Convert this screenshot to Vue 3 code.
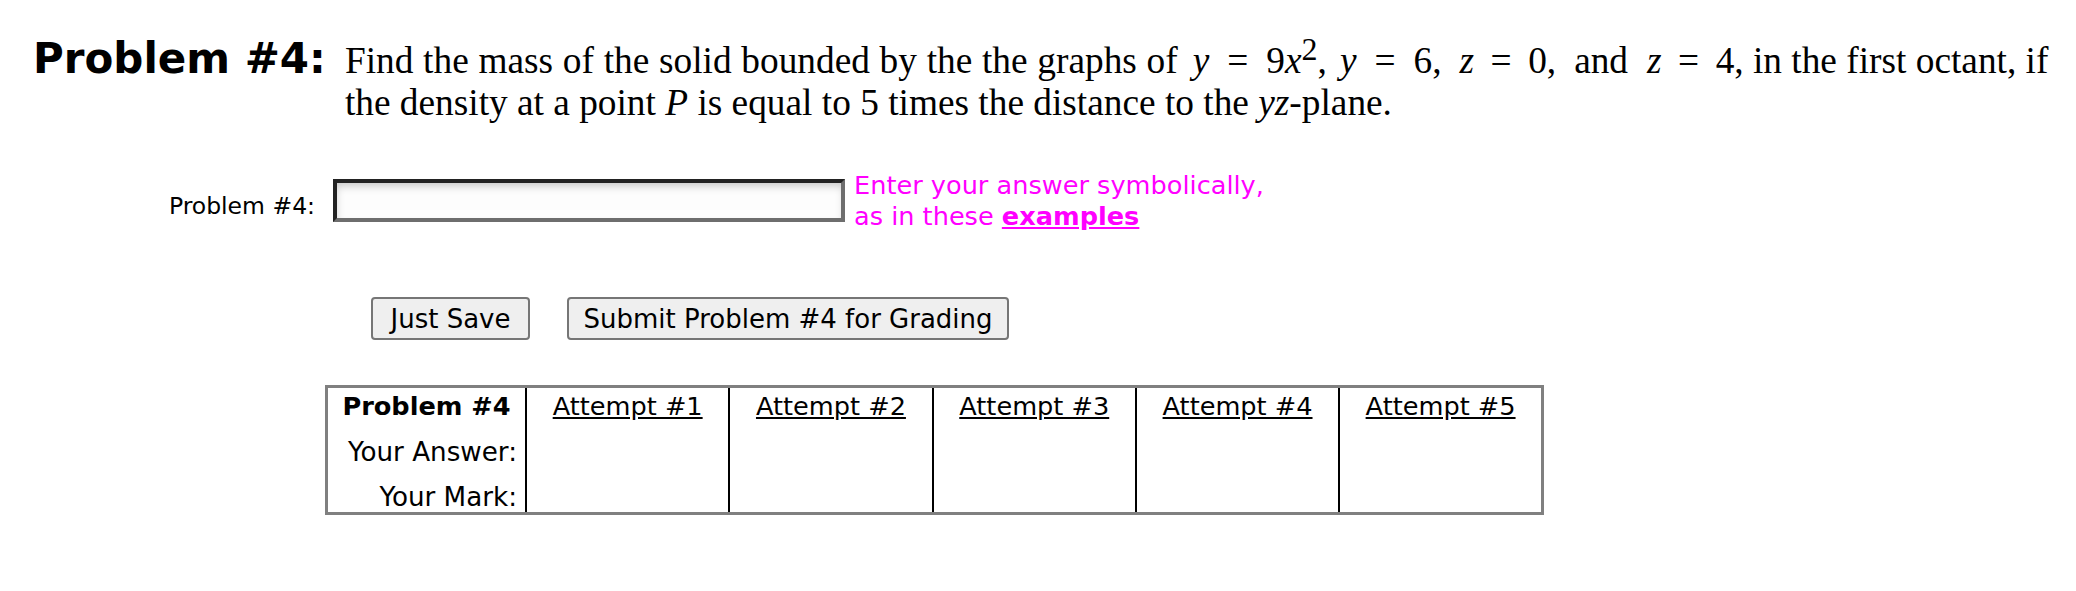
<script setup>
const attempts = [1, 2, 3, 4, 5]
</script>

<template>
  <main class="page">
    <!-- QUESTION -->
    <section class="question">
      <h2 class="qtitle">Problem #4:</h2>
      <p class="qtext">
        <span class="lead">Find the mass of the solid bounded by the the graphs of</span>
        <span class="math first"><i>y</i><span class="eq">=</span>9<i>x</i><sup>2</sup>,</span>
        <span class="math"><i>y</i><span class="eq">=</span>6,</span>
        <span class="math zero"><i>z</i><span class="eq tight">=</span>0,</span>
        <span class="math and">and</span>
        <span class="math last"><i>z</i><span class="eq tight">=</span>4,</span>
        in the first octant, if<br />
        the density at a point <i>P</i> is equal to 5 times the distance to the <i>yz</i>-plane.
      </p>
    </section>

    <!-- ANSWER -->
    <div class="answer">
      <label class="answer-label" for="ans">Problem #4:</label>
      <input id="ans" class="answer-input" type="text" />
      <div class="hint">
        Enter your answer symbolically,<br />
        as in these <a href="#" class="hint-link">examples</a>
      </div>
    </div>

    <div class="actions">
      <button class="btn btn-save" type="button">Just Save</button>
      <button class="btn btn-submit" type="button">Submit Problem #4 for Grading</button>
    </div>

    <!-- ATTEMPTS -->
    <table class="attempts">
      <tbody>
        <tr class="row">
          <th class="head">Problem #4</th>
          <td v-for="n in attempts" :key="n" rowspan="3" class="slot">
            <a href="#" class="attempt-link">Attempt #{{ n }}</a>
          </td>
        </tr>
        <tr class="row mid"><td class="rowlabel">Your Answer:</td></tr>
        <tr class="row last"><td class="rowlabel">Your Mark:</td></tr>
      </tbody>
    </table>
  </main>
</template>

<style scoped>
.page {
  width: 2076px;
  height: 591px;
  box-sizing: border-box;
  padding-top: 34px;
  padding-left: 33px;
  font-family: "DejaVu Sans", Verdana, sans-serif;
  color: #000;
  overflow: hidden;
}

/* --- question --- */
.question {
  display: flex;
  align-items: flex-start;
  gap: 19px;
}
.qtitle {
  margin: 0;
  font-size: 42px;
  line-height: 50px;
  font-weight: 700;
  white-space: nowrap;
}
.qtext {
  margin: 0;
  padding-top: 6px;
  font-family: "Liberation Serif", "Times New Roman", serif;
  font-size: 37.33px;
  line-height: 42px;
  white-space: nowrap;
}
.lead {
  word-spacing: 0.4px;
}
.math {
  margin: 0 7px;
}
.math.first {
  margin: 0 6px 0 15px;
}
.math.zero {
  margin-left: 11px;
}
.math.and {
  margin: 0 12px 0 11px;
}
.math.last {
  margin-right: 0;
}
.eq {
  margin: 0 18px;
}
.eq.tight {
  margin: 0 16.5px;
}
sup {
  font-size: 32px;
  line-height: 0;
}

/* --- answer row --- */
.answer {
  display: flex;
  align-items: center;
  margin-top: 45px;
  height: 62px;
}
.answer-label {
  width: 300px;
  padding: 12px 18px 0 0;
  box-sizing: border-box;
  text-align: right;
  font-size: 23.5px;
}
.answer-input {
  width: 512px;
  height: 43px;
  box-sizing: border-box;
  margin: 0 9px 0 0;
  padding: 0;
  border: 4px solid;
  border-color: #222 #6e6e6e #6e6e6e #222;
  background: #fdfdfd;
  box-shadow: inset 1px 5px 8px -2px rgba(0, 0, 0, 0.22);
  outline: none;
}
.hint {
  padding-top: 2px;
  color: #f0f;
  font-size: 25.6px;
  line-height: 31px;
}
.hint-link {
  color: #f0f;
  font-weight: 700;
}

/* --- buttons --- */
.actions {
  display: flex;
  gap: 37px;
  margin-top: 66px;
  padding-left: 338px;
}
.btn {
  height: 43px;
  padding: 1px 0 0;
  box-sizing: border-box;
  border: 2px solid #767676;
  border-radius: 4px;
  background: #efefef;
  font-family: inherit;
  font-size: 26px;
  color: #000;
}
.btn-save {
  width: 159px;
}
.btn-submit {
  width: 442px;
}

/* --- table --- */
.attempts {
  margin-top: 45px;
  margin-left: 292px;
  width: 1219px;
  table-layout: fixed;
  border-collapse: collapse;
  border: 3px solid #808080;
  font-size: 25.6px;
  line-height: 30px;
}
.row {
  height: 46px;
}
.row.mid {
  height: 45px;
}
.row.last {
  height: 36px;
}
.head {
  width: 197px;
  padding: 3px 0 0;
  vertical-align: top;
  font-weight: 700;
  text-align: center;
}
.rowlabel {
  padding: 4px 8px 0 0;
  vertical-align: top;
  text-align: right;
  font-size: 26.2px;
}
.slot {
  padding: 3px 0 0;
  vertical-align: top;
  text-align: center;
  border-left: 2px solid #000;
}
.attempt-link {
  color: #000;
}
</style>

<style>
body {
  background: #fff;
}
</style>
